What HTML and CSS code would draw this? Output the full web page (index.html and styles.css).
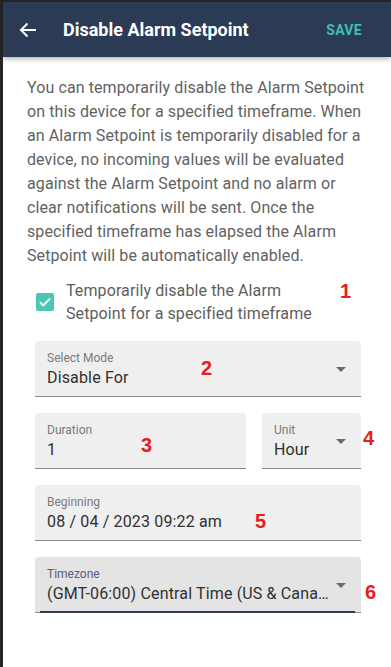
FILE: index.html
```html
<!DOCTYPE html>
<html>
<head>
<meta charset="utf-8">
<link rel="stylesheet" href="styles.css">
</head>
<body>
<div class="app">
  <header class="topbar">
    <svg class="back" width="18" height="16" viewBox="0 0 18 16"><path d="M17 8H2M8.5 1.5L2 8l6.5 6.5" fill="none" stroke="#fff" stroke-width="2"/></svg>
    <h1 class="title">Disable Alarm Setpoint</h1>
    <span class="save">SAVE</span>
  </header>
  <main class="content">
    <p class="intro">You can temporarily disable the Alarm Setpoint on this device for a specified timeframe. When an Alarm Setpoint is temporarily disabled for a device, no incoming values will be evaluated against the Alarm Setpoint and no alarm or clear notifications will be sent. Once the specified timeframe has elapsed the Alarm Setpoint will be automatically enabled.</p>
    <div class="check-row">
      <span class="checkbox"><svg width="14" height="14" viewBox="0 0 14 14"><path d="M2 7.2l3.2 3.2L12 3.6" fill="none" stroke="#fff" stroke-width="2"/></svg></span>
      <span class="check-label">Temporarily disable the Alarm Setpoint for a specified timeframe</span>
      <span class="anno anno-1">1</span>
    </div>
    <div class="fields">
      <div class="field select">
        <span class="flabel">Select Mode</span>
        <span class="fvalue">Disable For</span>
        <span class="caret"></span>
        <span class="anno anno-2">2</span>
      </div>
      <div class="field-row">
        <div class="field duration">
          <span class="flabel">Duration</span>
          <span class="fvalue">1</span>
          <span class="anno anno-3">3</span>
        </div>
        <div class="field select unit">
          <span class="flabel">Unit</span>
          <span class="fvalue">Hour</span>
          <span class="caret"></span>
          <span class="anno anno-4">4</span>
        </div>
      </div>
      <div class="field">
        <span class="flabel">Beginning</span>
        <span class="fvalue">08 / 04 / 2023 09:22 am</span>
        <span class="anno anno-5">5</span>
      </div>
      <div class="field select focused">
        <span class="flabel">Timezone</span>
        <span class="fvalue">(GMT-06:00) Central Time (US &amp; Canada)</span>
        <span class="caret"></span>
        <span class="anno anno-6">6</span>
      </div>
    </div>
  </main>
</div>
</body>
</html>
```

FILE: styles.css
```css
html, body {
  margin: 0;
  padding: 0;
  background: #262626;
  height: 100%;
}
body {
  font-family: Roboto, "Liberation Sans", Arial, sans-serif;
}
.app {
  margin-left: 3px;
  padding-top: 2px;
  height: 665px;
  display: flex;
  flex-direction: column;
}
.topbar {
  background: #2b3a55;
  height: 55px;
  display: flex;
  align-items: center;
  padding: 0 0 0 16px;
  box-shadow: 0 2px 5px rgba(0,0,0,0.3);
  position: relative;
  z-index: 1;
}
.back {
  display: block;
  margin-right: 26px;
}
.title {
  margin: 0;
  color: #fff;
  font-size: 18px;
  font-weight: 700;
  flex: 1;
  letter-spacing: 0;
}
.save {
  color: #3fbfad;
  font-size: 14px;
  font-weight: 700;
  margin-right: 29px;
  letter-spacing: 0.3px;
}
.content {
  flex: 1;
  background: #fff;
  padding: 19px 20px 0 24px;
}
.intro {
  margin: 0;
  font-size: 16px;
  line-height: 24px;
  letter-spacing: 0.1px;
  color: #626262;
}
.check-row {
  position: relative;
  display: flex;
  align-items: center;
  margin-top: 11px;
  padding-left: 9px;
}
.checkbox {
  width: 18px;
  height: 18px;
  border-radius: 2px;
  background: #4cc5b3;
  display: flex;
  align-items: center;
  justify-content: center;
  flex: none;
}
.check-label {
  margin-left: 12px;
  width: 255px;
  font-size: 16px;
  line-height: 23px;
  letter-spacing: 0.1px;
  color: #5e5e5e;
}
.fields {
  margin: 16px 10px 0 8px;
  display: flex;
  flex-direction: column;
  gap: 16px;
}
.field-row {
  display: flex;
  gap: 16px;
}
.field {
  position: relative;
  background: #efefef;
  border-radius: 4px 4px 0 0;
  border-bottom: 1px solid #8a8a8a;
  height: 55px;
  box-sizing: content-box;
  padding: 0 12px;
  display: flex;
  flex-direction: column;
}
.duration {
  flex: 1;
}
.unit {
  width: 75px;
  flex: none;
}
.flabel {
  margin-top: 10px;
  font-size: 12px;
  line-height: 14px;
  color: #7a7a7a;
}
.fvalue {
  margin-top: 1px;
  font-size: 16px;
  line-height: 24px;
  letter-spacing: 0.15px;
  color: #303030;
  white-space: nowrap;
  overflow: hidden;
  text-overflow: ellipsis;
}
.select .fvalue {
  padding-right: 20px;
}
.caret {
  position: absolute;
  right: 15px;
  top: 26px;
  width: 0;
  height: 0;
  border-left: 5px solid transparent;
  border-right: 5px solid transparent;
  border-top: 5px solid #6b6b6b;
}
.focused {
  background: #e4e4e4;
}
.focused .flabel {
  color: #56607a;
}
.focused::after {
  content: "";
  position: absolute;
  left: 5px;
  right: 6px;
  bottom: -1px;
  height: 2px;
  background: #2b3a55;
}
.anno {
  position: absolute;
  color: #e5201c;
  font-family: "Liberation Sans", Arial, sans-serif;
  font-weight: 700;
  font-size: 20px;
  line-height: 20px;
}
.anno-1 { left: 313px; top: 2px; }
.anno-2 { left: 166px; top: 17px; }
.anno-3 { left: 106px; top: 22px; }
.anno-4 { left: 101px; top: 15px; }
.anno-5 { left: 220px; top: 26px; }
.anno-6 { left: 330px; top: 25px; }
```
